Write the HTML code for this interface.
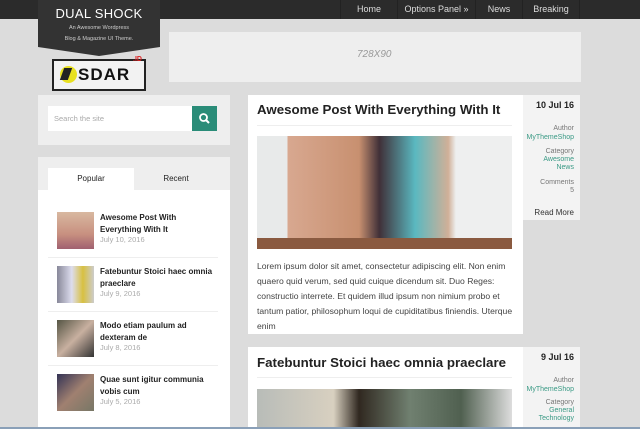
<!DOCTYPE html><html><head><style>
*{margin:0;padding:0;box-sizing:border-box}
body{width:640px;height:429px;overflow:hidden;background:#dcdcdc;font-family:"Liberation Sans",sans-serif;position:relative;color:#333}
.a{position:absolute}
.top{left:0;top:0;width:640px;height:19px;background:#2b2b2b}
.nav{top:0;height:19px;font-size:9px;color:#ddd;line-height:19px;text-align:center;border-right:1px solid #222}
.logo{left:38px;top:0;width:122px;height:47px;background:#333;color:#fff;text-align:center}
.post{background:#fff}
.meta{background:#f3f3f3;font-size:7px;line-height:8.3px;text-align:right;color:#777;padding-right:6px}
.meta .g{color:#3a9a85}
.ttl{font-weight:bold;font-size:13.3px;color:#222;white-space:nowrap}
.txt{font-size:8.6px;line-height:15px;color:#444}
.li{left:57px;width:160px;height:40px}
.li .th{position:absolute;left:0;top:0;width:37px;height:37px}
.li b{position:absolute;left:43px;top:0;font-size:8px;line-height:12px;color:#222;width:112px}
.li i{position:absolute;left:43px;font-style:normal;font-size:7.5px;color:#aaa}
.sep{left:48px;width:170px;height:1px;background:#eee}
</style></head><body>
<div class="a top"></div>
<div class="a nav" style="left:340px;width:58px;border-left:1px solid #222">Home</div>
<div class="a nav" style="left:398px;width:78px">Options Panel »</div>
<div class="a nav" style="left:476px;width:47px">News</div>
<div class="a nav" style="left:523px;width:57px">Breaking</div>
<div class="a logo"><div style="font-size:13px;margin-top:6px;letter-spacing:.3px">DUAL SHOCK</div><div style="font-size:5.5px;margin-top:4px;color:#ccc">An Awesome Wordpress</div><div style="font-size:5.5px;margin-top:5px;color:#ccc">Blog &amp; Magazine UI Theme.</div></div>
<div class="a" style="left:38px;top:47px;width:0;height:0;border-left:61px solid transparent;border-right:61px solid transparent;border-top:9px solid #333"></div>
<div class="a" style="left:52px;top:59px;width:94px;height:32px;background:#f2f2f2;border:2px solid #222"></div>
<div class="a" style="left:60px;top:66px;width:17px;height:17px;border-radius:50%;background:#e8e020"></div>
<div class="a" style="left:62px;top:68px;width:8px;height:12px;background:#222;transform:skewX(-20deg)"></div>
<div class="a" style="left:78px;top:65px;font-size:17px;font-weight:bold;color:#111;letter-spacing:1px">SDAR</div>
<div class="a" style="left:133px;top:56px;font-size:7px;font-weight:bold;color:#d22">.ID</div>
<div class="a" style="left:169px;top:32px;width:412px;height:50px;background:#eee"></div>
<div class="a" style="left:357px;top:49px;font-size:10px;font-style:italic;color:#999">728X90</div>
<div class="a" style="left:38px;top:95px;width:192px;height:50px;background:#eee"></div>
<div class="a" style="left:48px;top:106px;width:144px;height:25px;background:#fff;font-size:7.5px;color:#aaa;padding:8px 6px">Search the site</div>
<div class="a" style="left:192px;top:106px;width:25px;height:25px;background:#2a8c78"></div>
<svg class="a" style="left:198px;top:112px" width="13" height="13" viewBox="0 0 13 13"><circle cx="5.5" cy="5.5" r="3.5" fill="none" stroke="#fff" stroke-width="1.8"/><path d="M8 8l3 3" stroke="#fff" stroke-width="2"/></svg>
<div class="a" style="left:38px;top:157px;width:192px;height:272px;background:#fff"></div>
<div class="a" style="left:38px;top:157px;width:192px;height:33px;background:#eee"></div>
<div class="a" style="left:48px;top:168px;width:86px;height:22px;background:#fff;font-size:8px;text-align:center;line-height:22px;color:#222">Popular</div>
<div class="a" style="left:134px;top:168px;width:84px;height:22px;font-size:8px;text-align:center;line-height:22px;color:#222">Recent</div>
<div class="a li" style="top:212px"><div class="th" style="background:linear-gradient(#d8b8a0,#c89080 60%,#a06070)"></div><b>Awesome Post With Everything With It</b><i style="top:23px">July 10, 2016</i></div>
<div class="a sep" style="top:257px"></div>
<div class="a li" style="top:266px"><div class="th" style="background:linear-gradient(90deg,#889 ,#dde 40%,#d8c040 70%,#ccc)"></div><b>Fatebuntur Stoici haec omnia praeclare</b><i style="top:23px">July 9, 2016</i></div>
<div class="a sep" style="top:311px"></div>
<div class="a li" style="top:320px"><div class="th" style="background:linear-gradient(135deg,#554 ,#c8b0a0 50%,#333)"></div><b>Modo etiam paulum ad dexteram de</b><i style="top:23px">July 8, 2016</i></div>
<div class="a sep" style="top:365px"></div>
<div class="a li" style="top:374px"><div class="th" style="background:linear-gradient(135deg,#335 ,#a08070 50%,#776)"></div><b>Quae sunt igitur communia vobis cum</b><i style="top:23px">July 5, 2016</i></div>
<div class="a post" style="left:248px;top:95px;width:275px;height:239px"></div>
<div class="a ttl" style="left:257px;top:102px">Awesome Post With Everything With It</div>
<div class="a" style="left:257px;top:125px;width:255px;height:1px;background:#eee"></div>
<div class="a" style="left:257px;top:136px;width:255px;height:113px;background:linear-gradient(90deg,#e8eaea 0,#e8eaea 12%,#d8a890 12%,#c89070 40%,#403038 48%,#5ab8c0 62%,#d0b098 75%,#eeefef 78%)"></div>
<div class="a" style="left:257px;top:238px;width:255px;height:11px;background:#8a5a40"></div>
<div class="a txt" style="left:257px;top:259px;width:260px">Lorem ipsum dolor sit amet, consectetur adipiscing elit. Non enim quaero quid verum, sed quid cuique dicendum sit. Duo Reges: constructio interrete. Et quidem illud ipsum non nimium probo et tantum patior, philosophum loqui de cupiditatibus finiendis. Uterque enim</div>
<div class="a meta" style="left:523px;top:95px;width:57px;height:125px">
<div style="font-size:9px;font-weight:bold;color:#222;margin-top:6px">10 Jul 16</div>
<div style="margin-top:16px">Author</div><div class="g">MyThemeShop</div>
<div style="margin-top:6px">Category</div><div class="g">Awesome</div><div class="g">News</div>
<div style="margin-top:6px">Comments</div><div>5</div>
<div style="font-size:8px;color:#333;margin-top:14px">Read More</div></div>
<div class="a post" style="left:248px;top:347px;width:275px;height:82px"></div>
<div class="a ttl" style="left:257px;top:355px">Fatebuntur Stoici haec omnia praeclare</div>
<div class="a" style="left:257px;top:377px;width:255px;height:1px;background:#eee"></div>
<div class="a" style="left:257px;top:389px;width:255px;height:40px;background:linear-gradient(90deg,#b8bcb8,#d8d0c0 30%,#302820 40%,#708070 60%,#506050 80%,#ddd)"></div>
<div class="a meta" style="left:523px;top:347px;width:57px;height:82px">
<div style="font-size:9px;font-weight:bold;color:#222;margin-top:6px">9 Jul 16</div>
<div style="margin-top:16px">Author</div><div class="g">MyThemeShop</div>
<div style="margin-top:5px">Category</div><div class="g">General</div><div class="g">Technology</div></div>
<div class="a" style="left:0;top:427px;width:640px;height:2px;background:#8aa0b8"></div>
</body></html>
